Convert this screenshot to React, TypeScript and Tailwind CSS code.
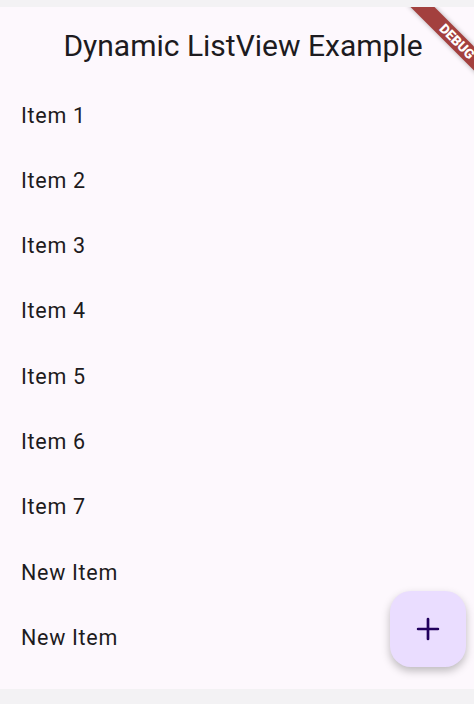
import { Plus } from 'lucide-react'

const items = ['Item 1', 'Item 2', 'Item 3', 'Item 4', 'Item 5', 'Item 6', 'Item 7', 'New Item', 'New Item']

export default function App() {
  return (
    <div
      className="flex h-[704px] w-[474px] flex-col overflow-hidden bg-[#f3f2f4]"
      style={{ fontFamily: 'Roboto, "Noto Sans", sans-serif' }}
    >
      <div className="h-[7px] shrink-0" />
      <div className="relative flex flex-1 flex-col overflow-hidden bg-[#fdf8fd]">
        <header className="flex h-[76px] shrink-0 items-center justify-center pl-[12px]">
          <h1 className="text-[30px] font-normal text-[#1d1b20]">Dynamic ListView Example</h1>
        </header>

        <ul className="flex flex-col">
          {items.map((item, i) => (
            <li
              key={i}
              className="flex h-[65.3px] items-center px-[21px] text-[21.5px] tracking-[0.7px] text-[#1d1b20]"
            >
              {item}
            </li>
          ))}
        </ul>

        <button
          type="button"
          className="absolute left-[390px] top-[584px] flex h-[76px] w-[76px] items-center justify-center rounded-[21px] bg-[#eaddff] text-[#21005d] shadow-[0_4px_8px_rgba(0,0,0,0.25)]"
        >
          <Plus className="h-[34px] w-[34px]" strokeWidth={1.9} />
        </button>

        <div className="pointer-events-none absolute left-[397px] top-[26px] flex h-[17px] w-[120px] rotate-45 items-center justify-center bg-[#a3403e] shadow-[0_0_5px_rgba(0,0,0,0.3)]">
          <span className="text-[13.5px] font-black leading-none text-white">DEBUG</span>
        </div>
      </div>
      <div className="h-[15px] shrink-0" />
    </div>
  )
}
